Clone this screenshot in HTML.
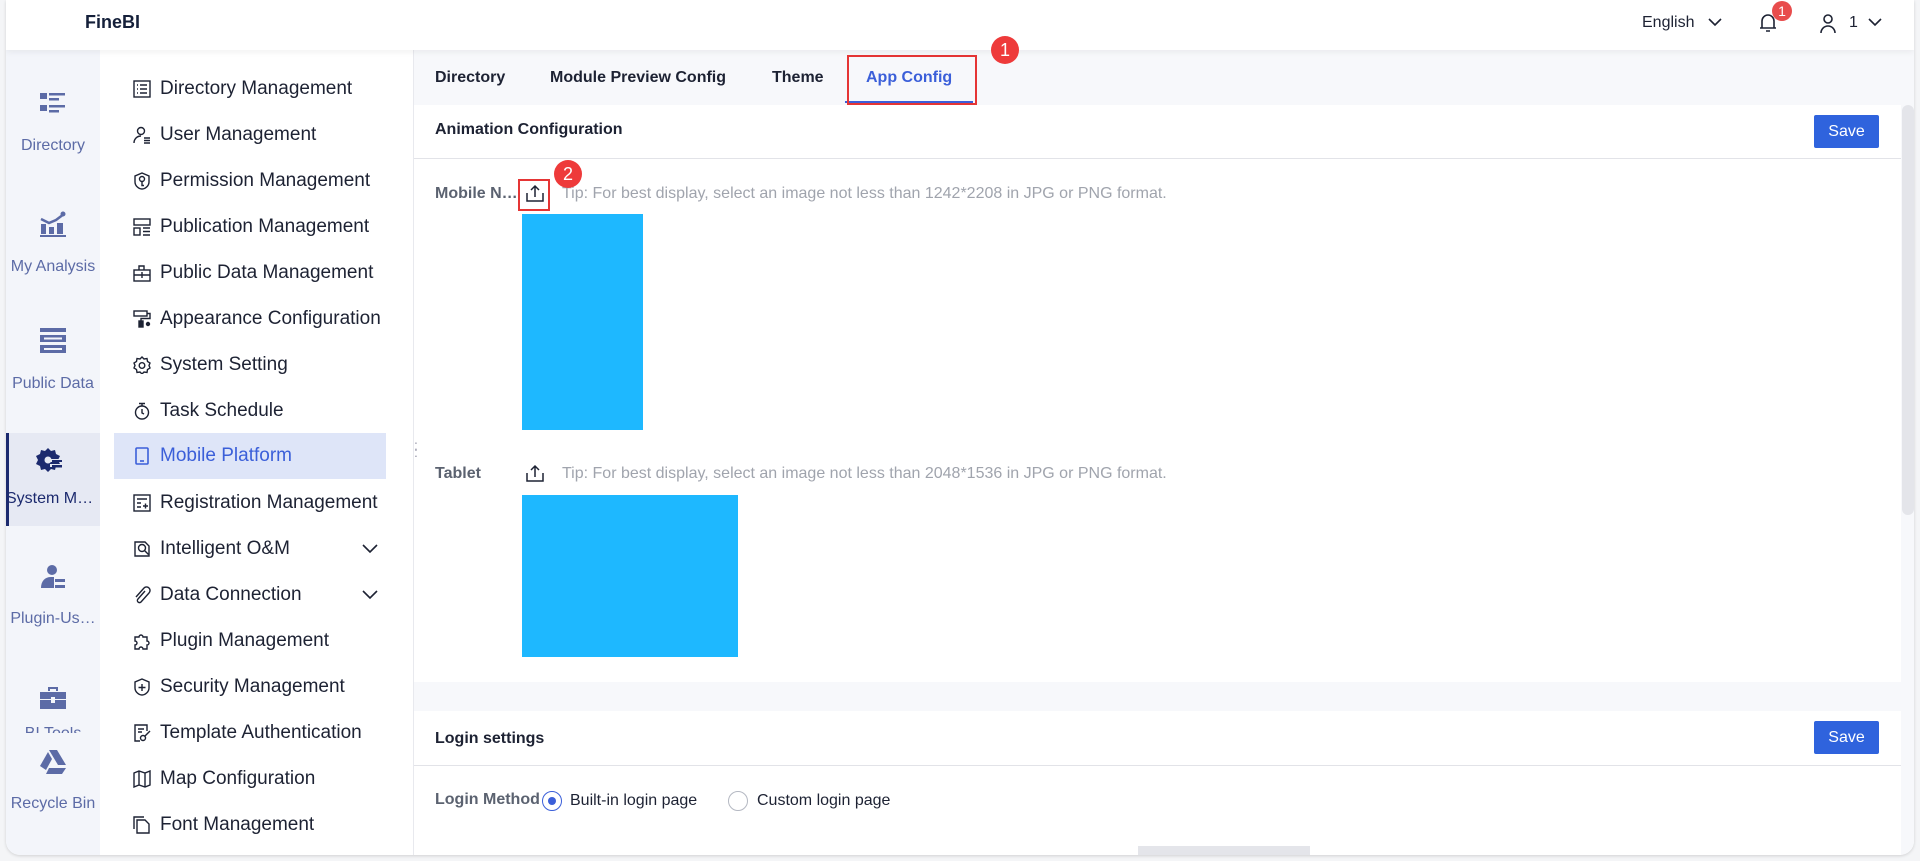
<!DOCTYPE html>
<html><head><meta charset="utf-8"><style>
*{box-sizing:border-box;margin:0;padding:0}
body{width:1920px;height:861px;background:#f4f5f7;font-family:"Liberation Sans",sans-serif;position:relative;overflow:hidden;color:#1d2233}
.abs{position:absolute}
.frame{left:6px;top:0;width:1908px;height:855px;background:#fff;border-radius:0 0 14px 14px;overflow:hidden;box-shadow:0 1px 3px rgba(0,0,0,.15)}
.hdr{left:0;top:0;width:1908px;height:50px;background:#fff;box-shadow:0 2px 6px rgba(0,0,0,.06);z-index:3}
.rail{left:0;top:50px;width:94px;height:805px;background:#f3f5fa}
.ri{position:absolute;left:0;width:94px;text-align:center;color:#5c6ba6;font-size:16px;white-space:nowrap}
.ri svg{display:block;margin:0 auto}
.menu{left:94px;top:50px;width:319px;height:805px;background:#fff}
.mi{position:absolute;left:0;width:319px;height:46px;font-size:19px;color:#1d2233;line-height:46px}
.mi svg{position:absolute;left:33px;top:14px}
.mi span{position:absolute;left:60px}
.mi.act{left:14px;width:272px;background:#dee5f8;color:#3b5fd9}
.mi.act svg{left:19px}.mi.act span{left:46px}
.content{left:407px;top:50px;width:1501px;height:805px;background:#f7f8fb}
.tab{position:absolute;top:19px;font-size:16px;font-weight:bold;color:#1d2233}
.card{position:absolute;left:0;width:1488px;background:#fff}
.ch{position:absolute;left:28px;font-size:16px;font-weight:bold}
.save{position:absolute;left:1407px;width:65px;height:33px;background:#2f63dd;color:#fff;border-radius:2px;font-size:16px;text-align:center;line-height:33px}
.lbl{position:absolute;font-size:16px;font-weight:bold;color:#5b6270}
.tip{position:absolute;font-size:16px;color:#a0a4ad}
.red{position:absolute;background:#ee3a3a;color:#fff;border-radius:50%;text-align:center;font-size:18px;z-index:6}
</style></head><body>
<div class="abs frame">
 <div class="abs hdr">
  <div class="abs" style="left:79px;top:12px;font-size:18px;font-weight:bold;color:#15203a">FineBI</div>
  <div class="abs" style="left:1636px;top:14px;font-size:16px;color:#1d2233">English</div>
  <svg class="abs" style="left:1702px;top:17px" width="14" height="10" viewBox="0 0 14 10"><path d="M1 2l6 6 6-6" fill="none" stroke="#1d2233" stroke-width="1.6"/></svg>
  <svg class="abs" style="left:1752px;top:12px" width="20" height="22" viewBox="0 0 20 22"><path d="M4 16V9a6 6 0 0 1 12 0v7M2 16h16M8 19h4" fill="none" stroke="#1d2233" stroke-width="1.6"/></svg>
  <div class="red" style="left:1766px;top:1px;width:20px;height:20px;line-height:20px;font-size:14px;background:#e84c4c">1</div>
  <svg class="abs" style="left:1812px;top:13px" width="20" height="20" viewBox="0 0 20 20"><circle cx="10" cy="6" r="4" fill="none" stroke="#1d2233" stroke-width="1.6"/><path d="M3 20a7 7 0 0 1 14 0" fill="none" stroke="#1d2233" stroke-width="1.6"/></svg>
  <div class="abs" style="left:1843px;top:14px;font-size:16px">1</div>
  <svg class="abs" style="left:1862px;top:17px" width="14" height="10" viewBox="0 0 14 10"><path d="M1 2l6 6 6-6" fill="none" stroke="#1d2233" stroke-width="1.6"/></svg>
 </div>
 <div class="abs rail">
  <div class="ri" style="top:43px"><svg width="26" height="22" viewBox="0 0 26 22"><rect x="0" y="0" width="7" height="6" fill="#5c6ba6"/><rect x="9" y="0" width="16" height="2.5" fill="#5c6ba6"/><rect x="9" y="5" width="10" height="2.5" fill="#5c6ba6"/><rect x="0" y="12" width="7" height="6" fill="#5c6ba6"/><rect x="9" y="12" width="16" height="2.5" fill="#5c6ba6"/><rect x="9" y="17" width="10" height="2.5" fill="#5c6ba6"/></svg><div style="margin-top:22px">Directory</div></div>
  <div class="ri" style="top:161px"><svg width="26" height="26" viewBox="0 0 26 26"><path d="M1 8l8 4 7-3 8-6" fill="none" stroke="#5c6ba6" stroke-width="2.5"/><circle cx="23" cy="3" r="2.5" fill="#5c6ba6"/><rect x="1" y="13" width="5" height="10" fill="#5c6ba6"/><rect x="9" y="16" width="5" height="7" fill="#5c6ba6"/><rect x="17" y="12" width="6" height="11" fill="#5c6ba6"/><rect x="0" y="24" width="26" height="2" fill="#5c6ba6"/></svg><div style="margin-top:21px">My Analysis</div></div>
  <div class="ri" style="top:278px"><svg width="26" height="26" viewBox="0 0 26 26"><rect x="0" y="0" width="26" height="4" fill="#5c6ba6"/><rect x="0" y="7" width="26" height="7" fill="#5c6ba6"/><rect x="4" y="9.5" width="18" height="2" fill="#f3f5fa"/><rect x="0" y="17" width="26" height="8" fill="#5c6ba6"/><rect x="4" y="20" width="18" height="2" fill="#f3f5fa"/></svg><div style="margin-top:21px">Public Data</div></div>
  <div class="ri" style="top:383px;height:93px;background:#e6e9f3;border-left:3px solid #1c2a6e;color:#1c2a6e;padding-top:14px;text-align:left"><svg width="26" height="26" viewBox="0 0 26 26" style="margin-left:27px"><path d="M12 1l3 3 4-1 1 4 4 2-2 4 2 4-4 2-1 4-4-1-3 3-3-3-4 1-1-4-4-2 2-4-2-4 4-2 1-4 4 1z" fill="#1c2a6e"/><circle cx="12" cy="13" r="3.5" fill="#e6e9f3"/><rect x="14" y="12" width="12" height="3" fill="#e6e9f3"/><rect x="14" y="17" width="12" height="3" fill="#e6e9f3"/><rect x="16" y="13" width="10" height="2" fill="#1c2a6e"/><rect x="16" y="18" width="10" height="2.5" fill="#1c2a6e"/></svg><div style="margin-top:17px;font-size:16px;margin-left:-3px">System M…</div></div>
  <div class="ri" style="top:514px"><svg width="26" height="26" viewBox="0 0 26 26"><circle cx="12" cy="6" r="5" fill="#5c6ba6"/><path d="M1 24c0-7 4-11 10-11h3v11z" fill="#5c6ba6"/><rect x="15" y="15" width="10" height="3" fill="#5c6ba6"/><rect x="15" y="21" width="10" height="3" fill="#5c6ba6"/></svg><div style="margin-top:20px">Plugin-Us…</div></div>
  <div class="ri" style="top:634px"><svg width="26" height="26" viewBox="0 0 26 26"><path d="M8 3h10v4h-2V5h-6v2H8z" fill="#5c6ba6"/><rect x="0" y="8" width="26" height="7" fill="#5c6ba6"/><rect x="0" y="16" width="26" height="9" fill="#5c6ba6"/><rect x="11" y="13" width="4" height="6" fill="#f3f5fa"/></svg><div style="margin-top:17px;height:6px;overflow:hidden;line-height:14px">BI Tools</div></div>
  <div class="ri" style="top:700px;background:#f3f5fa"><svg width="26" height="24" viewBox="0 0 26 24"><path d="M9 0h8l9 15h-8z" fill="#5c6ba6"/><path d="M8 2l4 7-6 11-6-4z" fill="#5c6ba6"/><path d="M9 18h17l-4 6H6z" fill="#5c6ba6"/></svg><div style="margin-top:21px">Recycle Bin</div></div>
 </div>
 <div class="abs menu">
  <div class="mi" style="top:16px"><svg width="18" height="18" viewBox="0 0 18 18" fill="none" stroke="#1d2233" stroke-width="1.4"><rect x="1" y="1" width="16" height="16"/><path d="M4 5h1M7 5h7M4 9h1M7 9h7M4 13h1M7 13h7"/></svg><span>Directory Management</span></div>
  <div class="mi" style="top:62px"><svg width="18" height="18" viewBox="0 0 18 18" fill="none" stroke="#1d2233" stroke-width="1.4"><circle cx="8" cy="5" r="3.5"/><path d="M1 17c0-4 3-7 7-7M11 12h6M11 14.5h6M11 17h6"/></svg><span>User Management</span></div>
  <div class="mi" style="top:108px"><svg width="18" height="18" viewBox="0 0 18 18" fill="none" stroke="#1d2233" stroke-width="1.4"><path d="M9 1l7 3v6c0 4-4 7-7 7s-7-3-7-7V4z"/><circle cx="9" cy="7" r="2.5"/><path d="M9 9.5v4h2"/></svg><span>Permission Management</span></div>
  <div class="mi" style="top:154px"><svg width="18" height="18" viewBox="0 0 18 18" fill="none" stroke="#1d2233" stroke-width="1.4"><rect x="1" y="1" width="16" height="6"/><rect x="1" y="10" width="6" height="7"/><path d="M10 10h7M10 13.5h7M10 17h7"/></svg><span>Publication Management</span></div>
  <div class="mi" style="top:200px"><svg width="18" height="18" viewBox="0 0 18 18" fill="none" stroke="#1d2233" stroke-width="1.4"><rect x="1" y="6" width="16" height="11"/><path d="M6 6V2h5v4M1 11h16M9 8v6"/></svg><span>Public Data Management</span></div>
  <div class="mi" style="top:246px"><svg width="18" height="18" viewBox="0 0 18 18" fill="none" stroke="#1d2233" stroke-width="1.4"><rect x="1" y="1" width="13" height="5"/><path d="M14 3.5h3v5H8v3"/><rect x="6" y="11" width="4" height="6" fill="#1d2233"/><circle cx="15" cy="14" r="1.5" fill="#1d2233"/></svg><span>Appearance Configuration</span></div>
  <div class="mi" style="top:292px"><svg width="18" height="18" viewBox="0 0 18 18" fill="none" stroke="#1d2233" stroke-width="1.4"><path d="M9 1l2 2 3-.5 .5 3L17 7l-1 2.5 1 2.5-2.5 1.5-.5 3-3-.5-2 2-2-2-3 .5-.5-3L1 12l1-2.5L1 7l2.5-1.5.5-3 3 .5z"/><circle cx="9" cy="9.5" r="2.8"/></svg><span>System Setting</span></div>
  <div class="mi" style="top:338px"><svg width="18" height="18" viewBox="0 0 18 18" fill="none" stroke="#1d2233" stroke-width="1.4"><circle cx="9" cy="10.5" r="6.5"/><path d="M6 1.5h6M9 1.5v3M9 7v4l2 1"/></svg><span>Task Schedule</span></div>
  <div class="mi act" style="top:383px"><svg width="18" height="18" viewBox="0 0 18 18" fill="none" stroke="#3b5fd9" stroke-width="1.6"><rect x="3" y="1" width="12" height="16" rx="1"/><path d="M7 14h4"/></svg><span>Mobile Platform</span></div>
  <div class="mi" style="top:430px"><svg width="18" height="18" viewBox="0 0 18 18" fill="none" stroke="#1d2233" stroke-width="1.4"><rect x="1" y="1" width="16" height="16"/><path d="M4 5h10M4 9h4M4 13h4M10 12h5M12.5 9.5v5"/></svg><span>Registration Management</span></div>
  <div class="mi" style="top:476px"><svg width="18" height="18" viewBox="0 0 18 18" fill="none" stroke="#1d2233" stroke-width="1.4"><path d="M2 2h10l4 4v10H2z"/><circle cx="9" cy="8" r="3.5"/><path d="M11.5 10.5l4 4"/></svg><span>Intelligent O&amp;M</span><svg style="left:262px;top:18px" width="16" height="10" viewBox="0 0 16 10"><path d="M1 1l7 7 7-7" fill="none" stroke="#1d2233" stroke-width="1.6"/></svg></div>
  <div class="mi" style="top:522px"><svg width="18" height="18" viewBox="0 0 18 18" fill="none" stroke="#1d2233" stroke-width="1.4"><path d="M12 5L5 13a2 2 0 0 0 3 3l8-9a3.5 3.5 0 0 0-5-5L3 11"/></svg><span>Data Connection</span><svg style="left:262px;top:18px" width="16" height="10" viewBox="0 0 16 10"><path d="M1 1l7 7 7-7" fill="none" stroke="#1d2233" stroke-width="1.6"/></svg></div>
  <div class="mi" style="top:568px"><svg width="18" height="18" viewBox="0 0 18 18" fill="none" stroke="#1d2233" stroke-width="1.4"><path d="M2 5h4a2 2 0 1 1 4 0h4v4a2 2 0 1 1 0 4v4H10a2 2 0 1 0-4 0H2v-4a2 2 0 1 0 0-4z"/></svg><span>Plugin Management</span></div>
  <div class="mi" style="top:614px"><svg width="18" height="18" viewBox="0 0 18 18" fill="none" stroke="#1d2233" stroke-width="1.4"><path d="M9 1l7 3v6c0 4-4 7-7 7s-7-3-7-7V4z"/><path d="M9 6v7M5.5 9.5h7"/></svg><span>Security Management</span></div>
  <div class="mi" style="top:660px"><svg width="18" height="18" viewBox="0 0 18 18" fill="none" stroke="#1d2233" stroke-width="1.4"><path d="M14 7V1H2v16h5M5 5h6M5 8h4"/><circle cx="10" cy="14" r="2.5"/><path d="M12 12l5-5"/></svg><span>Template Authentication</span></div>
  <div class="mi" style="top:706px"><svg width="18" height="18" viewBox="0 0 18 18" fill="none" stroke="#1d2233" stroke-width="1.4"><path d="M1 3l5-2 6 2 5-2v14l-5 2-6-2-5 2zM6 1v14M12 3v14"/></svg><span>Map Configuration</span></div>
  <div class="mi" style="top:752px"><svg width="18" height="18" viewBox="0 0 18 18" fill="none" stroke="#1d2233" stroke-width="1.4"><path d="M1 13V1h10"/><path d="M4 4h8l4 4v9H4z"/></svg><span>Font Management</span></div>
 </div>
 <div class="abs" style="left:407px;top:50px;width:1px;height:805px;background:#e8e9ee;z-index:2"></div>
 <div class="abs" style="left:408px;top:442px;color:#99a;font-size:14px;line-height:7px;width:6px;z-index:2">: :</div>
 <div class="abs content">
  <div class="tab" style="left:22px">Directory</div>
  <div class="tab" style="left:137px">Module Preview Config</div>
  <div class="tab" style="left:359px">Theme</div>
  <div class="tab" style="left:453px;color:#3b5fd9">App Config</div>
  <div class="abs" style="left:432px;top:51px;width:128px;height:2px;background:#3b5fd9"></div>
  <div class="abs" style="left:434px;top:5px;width:130px;height:50px;border:2px solid #e53535"></div>
  <div class="red" style="left:578px;top:-14px;width:28px;height:28px;line-height:28px">1</div>
  <div class="card" style="top:55px;height:577px">
   <div class="ch" style="top:16px;left:22px">Animation Configuration</div>
   <div class="save" style="top:10px;left:1401px">Save</div>
   <div class="abs" style="left:0;top:53px;width:1488px;height:1px;background:#e2e3e8"></div>
   <div class="lbl" style="left:22px;top:80px">Mobile N…</div>
   <svg class="abs" style="left:113px;top:79px" width="18" height="18" viewBox="0 0 18 18" fill="none" stroke="#1d2233" stroke-width="1.5"><path d="M1 9v8h16V9M9 13V2M5 6l4-4 4 4"/></svg>
   <div class="abs" style="left:105px;top:74px;width:32px;height:32px;border:2px solid #e53535"></div>
   <div class="red" style="left:141px;top:55px;width:28px;height:28px;line-height:28px">2</div>
   <div class="tip" style="left:149px;top:80px">Tip: For best display, select an image not less than 1242*2208 in JPG or PNG format.</div>
   <div class="abs" style="left:109px;top:109px;width:121px;height:216px;background:#1eb8ff"></div>
   <div class="lbl" style="left:22px;top:360px">Tablet</div>
   <svg class="abs" style="left:113px;top:359px" width="18" height="18" viewBox="0 0 18 18" fill="none" stroke="#1d2233" stroke-width="1.5"><path d="M1 9v8h16V9M9 13V2M5 6l4-4 4 4"/></svg>
   <div class="tip" style="left:149px;top:360px">Tip: For best display, select an image not less than 2048*1536 in JPG or PNG format.</div>
   <div class="abs" style="left:109px;top:390px;width:216px;height:162px;background:#1eb8ff"></div>
  </div>
  <div class="card" style="top:661px;height:144px">
   <div class="ch" style="top:19px;left:22px">Login settings</div>
   <div class="save" style="top:10px;left:1401px">Save</div>
   <div class="abs" style="left:0;top:54px;width:1488px;height:1px;background:#e2e3e8"></div>
   <div class="lbl" style="left:22px;top:80px">Login Method</div>
   <div class="abs" style="left:129px;top:80px;width:20px;height:20px;border:1.5px solid #3b5fd9;border-radius:50%"></div>
   <div class="abs" style="left:135px;top:86px;width:8px;height:8px;background:#3b5fd9;border-radius:50%"></div>
   <div class="abs" style="left:157px;top:81px;font-size:16px">Built-in login page</div>
   <div class="abs" style="left:315px;top:80px;width:20px;height:20px;border:1.5px solid #b4b8c2;border-radius:50%"></div>
   <div class="abs" style="left:344px;top:81px;font-size:16px">Custom login page</div>
  </div>
  <div class="abs" style="left:1489px;top:55px;width:12px;height:410px;background:#e4e5ea;border-radius:6px"></div>
  <div class="abs" style="left:725px;top:796px;width:172px;height:9px;background:#e4e5ea"></div>
 </div>
</div>
</body></html>
